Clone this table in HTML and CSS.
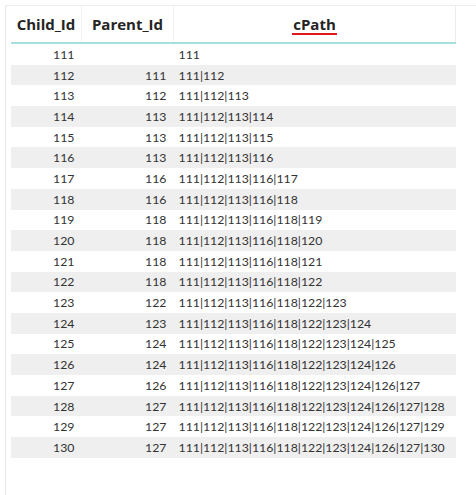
FILE: index.html
```html
<!DOCTYPE html>
<html>
<head>
<meta charset="utf-8">
<link rel="stylesheet" href="styles.css">
</head>
<body>
<div class="frame">
  <table class="grid">
    <thead>
      <tr>
        <th class="c1">Child_Id</th>
        <th class="c2">Parent_Id</th>
        <th class="c3"><span class="mark">cPath</span></th>
      </tr>
    </thead>
    <tbody>
      <tr><td class="n">111</td><td class="n"></td><td class="p">111</td></tr>
      <tr><td class="n">112</td><td class="n">111</td><td class="p">111|112</td></tr>
      <tr><td class="n">113</td><td class="n">112</td><td class="p">111|112|113</td></tr>
      <tr><td class="n">114</td><td class="n">113</td><td class="p">111|112|113|114</td></tr>
      <tr><td class="n">115</td><td class="n">113</td><td class="p">111|112|113|115</td></tr>
      <tr><td class="n">116</td><td class="n">113</td><td class="p">111|112|113|116</td></tr>
      <tr><td class="n">117</td><td class="n">116</td><td class="p">111|112|113|116|117</td></tr>
      <tr><td class="n">118</td><td class="n">116</td><td class="p">111|112|113|116|118</td></tr>
      <tr><td class="n">119</td><td class="n">118</td><td class="p">111|112|113|116|118|119</td></tr>
      <tr><td class="n">120</td><td class="n">118</td><td class="p">111|112|113|116|118|120</td></tr>
      <tr><td class="n">121</td><td class="n">118</td><td class="p">111|112|113|116|118|121</td></tr>
      <tr><td class="n">122</td><td class="n">118</td><td class="p">111|112|113|116|118|122</td></tr>
      <tr><td class="n">123</td><td class="n">122</td><td class="p">111|112|113|116|118|122|123</td></tr>
      <tr><td class="n">124</td><td class="n">123</td><td class="p">111|112|113|116|118|122|123|124</td></tr>
      <tr><td class="n">125</td><td class="n">124</td><td class="p">111|112|113|116|118|122|123|124|125</td></tr>
      <tr><td class="n">126</td><td class="n">124</td><td class="p">111|112|113|116|118|122|123|124|126</td></tr>
      <tr><td class="n">127</td><td class="n">126</td><td class="p">111|112|113|116|118|122|123|124|126|127</td></tr>
      <tr><td class="n">128</td><td class="n">127</td><td class="p">111|112|113|116|118|122|123|124|126|127|128</td></tr>
      <tr><td class="n">129</td><td class="n">127</td><td class="p">111|112|113|116|118|122|123|124|126|127|129</td></tr>
      <tr><td class="n">130</td><td class="n">127</td><td class="p">111|112|113|116|118|122|123|124|126|127|130</td></tr>
    </tbody>
  </table>
</div>
</body>
</html>
```
FILE: styles.css
```css
html, body {
  margin: 0;
  padding: 0;
  background: #ffffff;
}
body {
  font-family: "Open Sans", "Noto Sans", sans-serif;
  color: #333333;
}
.frame {
  margin: 5px 0 0 5px;
  height: 490px;
  border-top: 1px solid #ececec;
  border-left: 1px solid #e6e6e6;
  padding-left: 5px;
  box-sizing: border-box;
}
.grid {
  border-collapse: collapse;
  width: 445px;
  table-layout: fixed;
}
.grid th {
  height: 36px;
  padding: 0;
  font-size: 15px;
  font-weight: 700;
  color: #252423;
  border-bottom: 2px solid #a8dede;
  vertical-align: middle;
}
.grid th.c1 { width: 70px; border-right: 1px solid #f2f2f2; text-align: center; }
.grid th.c2 { width: 91px; border-right: 1px solid #f2f2f2; text-align: center; }
.grid th.c3 { text-align: center; border-right: 1px solid #ececec; }
.mark {
  display: inline-block;
  border-bottom: 2px solid #e01818;
  line-height: 18px;
  padding: 0 1px;
}
.grid td {
  height: 20.7px;
  padding: 0;
  font-family: "Lato", "Liberation Sans", sans-serif;
  font-size: 12.3px;
  white-space: nowrap;
}
.grid tbody tr:nth-child(even) td { background: #efefef; }
.grid td.n { text-align: right; padding-right: 7px; }
.grid td.p { text-align: left; padding-left: 5px; }
```
